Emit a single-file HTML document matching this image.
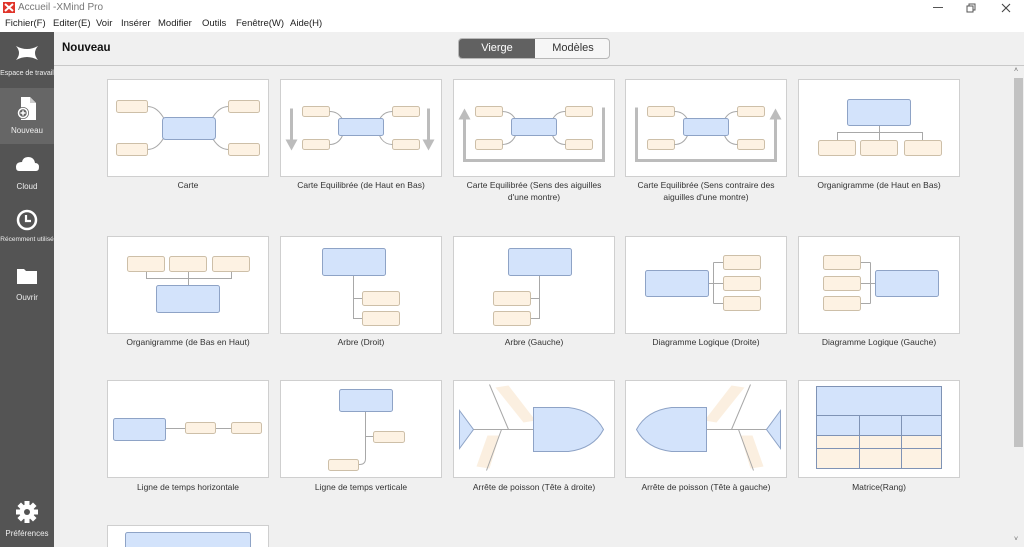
<!DOCTYPE html>
<html><head><meta charset="utf-8"><style>
*{margin:0;padding:0;box-sizing:border-box}
body{width:1024px;height:547px;overflow:hidden;background:#f0f0f0;font-family:"Liberation Sans",sans-serif;position:relative}
.t{position:absolute;white-space:nowrap}
#title{left:0;top:0;width:1024px;height:16px;background:#fff}
#menu{left:0;top:16px;width:1024px;height:16px;background:#fff;font-size:9.5px;color:#222}
#side{left:0;top:32px;width:54px;height:515px;background:#545454}
.lbl{position:absolute;width:54px;text-align:center;color:#eee;font-size:8px;left:0}
.cap{position:absolute;width:172px;text-align:center;font-size:8.5px;color:#333;line-height:12px}
</style></head><body>
<div class="t" id="title">
<svg style="position:absolute;left:3px;top:2px" width="12" height="11"><rect width="12" height="11" fill="#e0352b"/><path d="M2 2 L10 9 M10 2 L2 9" stroke="#fff" stroke-width="2"/></svg>
<span class="t" style="left:18px;top:2px;font-size:10px;color:#777">Accueil -XMind Pro</span>
<div class="t" style="left:933px;top:7px;width:10px;height:1px;background:#555"></div>
<svg style="position:absolute;left:966px;top:3px" width="10" height="10"><rect x="1" y="3" width="6" height="6" fill="none" stroke="#555"/><path d="M3 3V1H9V7H7" fill="none" stroke="#555"/></svg>
<svg style="position:absolute;left:1001px;top:3px" width="10" height="10"><path d="M1 1L9 9M9 1L1 9" stroke="#444" stroke-width="1.1"/></svg>
</div>
<div class="t" id="menu">
<span class="t" style="left:5px;top:2px">Fichier(F)</span><span class="t" style="left:53px;top:2px">Editer(E)</span><span class="t" style="left:96px;top:2px">Voir</span><span class="t" style="left:121px;top:2px">Insérer</span><span class="t" style="left:158px;top:2px">Modifier</span><span class="t" style="left:202px;top:2px">Outils</span><span class="t" style="left:236px;top:2px">Fenêtre(W)</span><span class="t" style="left:290px;top:2px">Aide(H)</span>
</div>
<div class="t" id="side">
<div style="position:absolute;left:0;top:56px;width:54px;height:56px;background:#666"></div>
<svg style="position:absolute;left:14px;top:12px" width="26" height="18"><path d="M2 2 Q13 8 24 2 Q18 9 24 16 Q13 10 2 16 Q8 9 2 2Z" fill="#fff"/></svg>
<div class="lbl" style="top:38px;font-size:7px">Espace de travail</div>
<svg style="position:absolute;left:16px;top:64px" width="22" height="26"><path d="M5 1H14L20 7V24H5Z" fill="#fff"/><path d="M14 1V7H20" fill="#ccc"/><circle cx="7" cy="17" r="6" fill="#666"/><circle cx="7" cy="17" r="4.5" fill="none" stroke="#fff" stroke-width="1.5"/><path d="M7 14.5V19.5M4.5 17H9.5" stroke="#fff" stroke-width="1.5"/></svg>
<div class="lbl" style="top:94px">Nouveau</div>
<svg style="position:absolute;left:15px;top:124px" width="24" height="16"><path d="M4 15H21Q24 15 24 11Q24 7 20 7Q19 1 13 1Q8 1 7 6Q1 6 1 11Q1 15 4 15Z" fill="#fff"/></svg>
<div class="lbl" style="top:150px">Cloud</div>
<svg style="position:absolute;left:16px;top:177px" width="22" height="22"><circle cx="11" cy="11" r="9" fill="none" stroke="#fff" stroke-width="2.5"/><path d="M10 6V12H15" fill="none" stroke="#fff" stroke-width="2.2"/></svg>
<div class="lbl" style="top:204px;font-size:6.5px">Récemment utilisé</div>
<svg style="position:absolute;left:16px;top:235px" width="22" height="18"><path d="M1 2H8L10 4H21V17H1Z" fill="#fff"/></svg>
<div class="lbl" style="top:261px">Ouvrir</div>
<svg style="position:absolute;left:16px;top:469px" width="22" height="22"><g fill="#fff" transform="translate(11 11)"><circle r="7.5"/><g><rect x="-2.5" y="-11" width="5" height="22"/><rect x="-2.5" y="-11" width="5" height="22" transform="rotate(45)"/><rect x="-2.5" y="-11" width="5" height="22" transform="rotate(90)"/><rect x="-2.5" y="-11" width="5" height="22" transform="rotate(135)"/></g></g><circle cx="11" cy="11" r="3" fill="#545454"/></svg>
<div class="lbl" style="top:497px">Préférences</div>
</div>
<div class="t" style="left:54px;top:32px;width:970px;height:34px;border-bottom:1px solid #c8c8c8;background:#f0f0f0"></div>
<span class="t" style="left:62px;top:42px;font-size:11.5px;font-weight:bold;color:#111">Nouveau</span>
<div class="t" style="left:458px;top:38px;width:152px;height:21px;border:1px solid #b8b8b8;border-radius:4px;background:#f6f6f6;overflow:hidden">
<div style="position:absolute;left:0;top:0;width:76px;height:19px;background:#616161;color:#fff;font-size:11px;text-align:center;line-height:19px">Vierge</div>
<div style="position:absolute;left:76px;top:0;width:76px;height:19px;color:#333;font-size:11px;text-align:center;line-height:19px">Modèles</div>
</div>
<div class="t" style="left:1012px;top:67px;width:12px;height:480px;background:#f0f0f0"></div>
<div class="t" style="left:1014px;top:78px;width:9px;height:369px;background:#c2c2c2"></div>
<span class="t" style="left:1014px;top:67px;font-size:7px;color:#666">˄</span>
<span class="t" style="left:1014px;top:536px;font-size:7px;color:#666">˅</span>

<svg class="t" style="left:0;top:0" width="1010" height="547">
<defs>
<style>.c{fill:#fff;stroke:#cfcfcf}.b{fill:#d3e3fb;stroke:#8ea3c6;stroke-width:1}.y{fill:#fdf2e3;stroke:#cdbfa8;stroke-width:1}.l{fill:none;stroke:#a8a8a8;stroke-width:1}.a{fill:none;stroke:#bcbcbc;stroke-width:3}.ah{fill:#bcbcbc}</style>
<g id="bal">
<rect class="y" x="22" y="27" width="27" height="10" rx="2"/><rect class="y" x="22" y="60" width="27" height="10" rx="2"/>
<rect class="y" x="112" y="27" width="27" height="10" rx="2"/><rect class="y" x="112" y="60" width="27" height="10" rx="2"/>
<path class="l" d="M49 32Q58 32 62 40M49 65Q58 65 62 56M112 32Q103 32 99 40M112 65Q103 65 99 56"/>
<rect class="b" x="58" y="39" width="45" height="17" rx="2"/>
</g>
</defs>
<g transform="translate(107.5 79.5)"><rect class="c" width="161" height="97"/>
<path class="l" d="M40 27Q50 27 57 40M40 70Q50 70 57 57M121 27Q111 27 104 40M121 70Q111 70 104 57"/>
<rect class="y" x="9" y="21" width="31" height="12" rx="2"/><rect class="y" x="9" y="64" width="31" height="12" rx="2"/>
<rect class="y" x="121" y="21" width="31" height="12" rx="2"/><rect class="y" x="121" y="64" width="31" height="12" rx="2"/>
<rect class="b" x="55" y="38" width="53" height="22" rx="3"/></g>
<g transform="translate(280.5 79.5)"><rect class="c" width="161" height="97"/>
<path class="a" d="M11 29V62M148 29V62"/><path class="ah" d="M5 60H17L11 71ZM142 60H154L148 71Z"/><use href="#bal"/></g>
<g transform="translate(453.5 79.5)"><rect class="c" width="161" height="97"/>
<path class="a" d="M11 38V81H150V28"/><path class="ah" d="M5 40H17L11 29Z"/><use href="#bal"/></g>
<g transform="translate(625.5 79.5)"><rect class="c" width="161" height="97"/>
<path class="a" d="M11 28V81H150V38"/><path class="ah" d="M144 40H156L150 29Z"/><use href="#bal"/></g>
<g transform="translate(798.5 79.5)"><rect class="c" width="161" height="97"/>
<path class="l" d="M81 46V53M39 61V53H124V61M81 53V61"/>
<rect class="b" x="49" y="20" width="63" height="26" rx="2"/>
<rect class="y" x="20" y="61" width="37" height="15" rx="2"/><rect class="y" x="62" y="61" width="37" height="15" rx="2"/><rect class="y" x="106" y="61" width="37" height="15" rx="2"/></g>
<g transform="translate(107.5 236.5)"><rect class="c" width="161" height="97"/>
<path class="l" d="M39 35V42H124V35M81 35V49"/>
<rect class="y" x="20" y="20" width="37" height="15" rx="2"/><rect class="y" x="62" y="20" width="37" height="15" rx="2"/><rect class="y" x="105" y="20" width="37" height="15" rx="2"/>
<rect class="b" x="49" y="49" width="63" height="27" rx="2"/></g>
<g transform="translate(280.5 236.5)"><rect class="c" width="161" height="97"/>
<path class="l" d="M73 39V82H82M73 62H82"/>
<rect class="b" x="42" y="12" width="63" height="27" rx="2"/>
<rect class="y" x="82" y="55" width="37" height="14" rx="2"/><rect class="y" x="82" y="75" width="37" height="14" rx="2"/></g>
<g transform="translate(453.5 236.5)"><rect class="c" width="161" height="97"/>
<path class="l" d="M86 39V82H77M86 62H77"/>
<rect class="b" x="55" y="12" width="63" height="27" rx="2"/>
<rect class="y" x="40" y="55" width="37" height="14" rx="2"/><rect class="y" x="40" y="75" width="37" height="14" rx="2"/></g>
<g transform="translate(625.5 236.5)"><rect class="c" width="161" height="97"/>
<path class="l" d="M83 47H88M88 26V67M88 26H98M88 47H98M88 67H98"/>
<rect class="b" x="20" y="34" width="63" height="26" rx="2"/>
<rect class="y" x="98" y="19" width="37" height="14" rx="2"/><rect class="y" x="98" y="40" width="37" height="14" rx="2"/><rect class="y" x="98" y="60" width="37" height="14" rx="2"/></g>
<g transform="translate(798.5 236.5)"><rect class="c" width="161" height="97"/>
<path class="l" d="M77 47H72M72 26V67M72 26H62M72 47H62M72 67H62"/>
<rect class="b" x="77" y="34" width="63" height="26" rx="2"/>
<rect class="y" x="25" y="19" width="37" height="14" rx="2"/><rect class="y" x="25" y="40" width="37" height="14" rx="2"/><rect class="y" x="25" y="60" width="37" height="14" rx="2"/></g>
<g transform="translate(107.5 380.5)"><rect class="c" width="161" height="97"/>
<path class="l" d="M58 48H124"/>
<rect class="b" x="6" y="38" width="52" height="22" rx="2"/>
<rect class="y" x="78" y="42" width="30" height="11" rx="2"/><rect class="y" x="124" y="42" width="30" height="11" rx="2"/></g>
<g transform="translate(280.5 380.5)"><rect class="c" width="161" height="97"/>
<path class="l" d="M85 31V78Q85 84 79 84H78M85 56H93"/>
<rect class="b" x="59" y="9" width="53" height="22" rx="2"/>
<rect class="y" x="93" y="51" width="31" height="11" rx="2"/><rect class="y" x="48" y="79" width="30" height="11" rx="2"/></g>
<g transform="translate(453.5 380.5)"><rect class="c" width="161" height="97"/>
<path d="M42 7L55 5L82 40L70 42Z" fill="#fbefe0"/><path d="M34 55L46 55L36 88L23 86Z" fill="#fbefe0"/>
<path class="l" d="M20 49H80M36 4L55 49M48 49L33 90"/>
<path class="b" d="M6 30L20 49L6 68Z"/>
<path class="b" d="M80 27H115Q140 30 150 49Q140 68 115 71H80Z"/></g>
<g transform="translate(625.5 380.5)"><rect class="c" width="161" height="97"/>
<path d="M119 7L106 5L79 40L91 42Z" fill="#fbefe0"/><path d="M127 55L115 55L125 88L138 86Z" fill="#fbefe0"/>
<path class="l" d="M141 49H81M125 4L106 49M113 49L128 90"/>
<path class="b" d="M155 30L141 49L155 68Z"/>
<path class="b" d="M81 27H46Q21 30 11 49Q21 68 46 71H81Z"/></g>
<g transform="translate(798.5 380.5)"><rect class="c" width="161" height="97"/>
<rect x="18" y="6" width="125" height="49" fill="#d3e3fb"/><rect x="18" y="55" width="125" height="33" fill="#fdf2e3"/>
<path fill="none" stroke="#7f93b5" d="M18 6H143V88H18ZM18 35H143M18 55H143M18 68H143M61 35V88M103 35V88"/></g>
<g transform="translate(107.5 525.5)"><rect class="c" width="161" height="40"/><rect class="b" x="18" y="7" width="125" height="30" rx="2"/></g>
</svg>
<div class="cap" style="left:102px;top:179px">Carte</div>
<div class="cap" style="left:275px;top:179px">Carte Equilibrée (de Haut en Bas)</div>
<div class="cap" style="left:448px;top:179px">Carte Equilibrée (Sens des aiguilles<br>d'une montre)</div>
<div class="cap" style="left:620px;top:179px">Carte Equilibrée (Sens contraire des<br>aiguilles d'une montre)</div>
<div class="cap" style="left:793px;top:179px">Organigramme (de Haut en Bas)</div>
<div class="cap" style="left:102px;top:336px">Organigramme (de Bas en Haut)</div>
<div class="cap" style="left:275px;top:336px">Arbre (Droit)</div>
<div class="cap" style="left:448px;top:336px">Arbre (Gauche)</div>
<div class="cap" style="left:620px;top:336px">Diagramme Logique (Droite)</div>
<div class="cap" style="left:793px;top:336px">Diagramme Logique (Gauche)</div>
<div class="cap" style="left:102px;top:481px">Ligne de temps horizontale</div>
<div class="cap" style="left:275px;top:481px">Ligne de temps verticale</div>
<div class="cap" style="left:448px;top:481px">Arrête de poisson (Tête à droite)</div>
<div class="cap" style="left:620px;top:481px">Arrête de poisson (Tête à gauche)</div>
<div class="cap" style="left:793px;top:481px">Matrice(Rang)</div>
</body></html>
